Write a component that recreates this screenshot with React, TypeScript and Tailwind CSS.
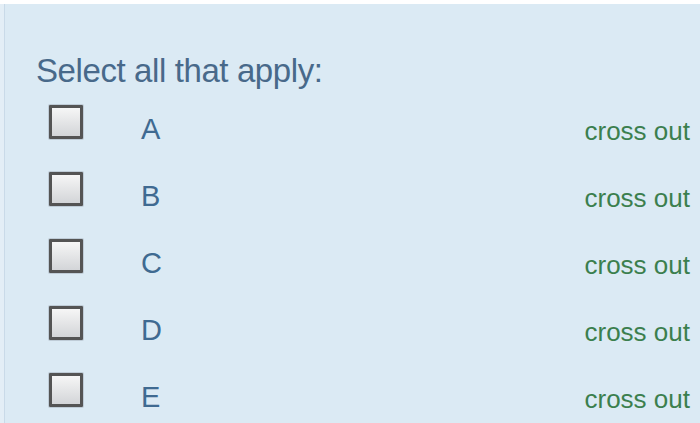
const OPTIONS = ["A", "B", "C", "D", "E"];

function Checkbox() {
  return (
    <span className="block w-[34px] h-[34px] border-[3px] border-[#545454] rounded-[1px] bg-gradient-to-b from-[#f6f6f6] to-[#d3d5d8] shadow-[0_0_0_1px_rgba(140,150,160,0.35)]" />
  );
}

export default function App() {
  return (
    <div className="w-[700px] h-[423px] overflow-hidden bg-[#dbeaf4] flex flex-col font-['Liberation_Sans',Arial,sans-serif]">
      <div className="h-[4px] bg-white shrink-0" />
      <div className="flex flex-1">
        <div className="w-[5px] bg-[#e3eef6] border-r border-[#c9dae8] shrink-0" />
        <div className="flex-1 pl-[31px] pr-[10px] pt-[50px]">
          <h2 className="text-[33px] leading-none tracking-[-0.4px] text-[#48698a] font-normal">
            Select all that apply:
          </h2>
          <ul className="mt-[2px]">
            {OPTIONS.map((opt) => (
              <li key={opt} className="h-[67px] flex items-start">
                <label className="ml-[13px] mt-[16px]">
                  <Checkbox />
                </label>
                <span className="ml-[58px] mt-[26px] text-[29px] leading-none text-[#3f6a91]">
                  {opt}
                </span>
                <span className="ml-auto mt-[29px] text-[26px] leading-none text-[#3b7f4e]">
                  cross out
                </span>
              </li>
            ))}
          </ul>
        </div>
      </div>
    </div>
  );
}
